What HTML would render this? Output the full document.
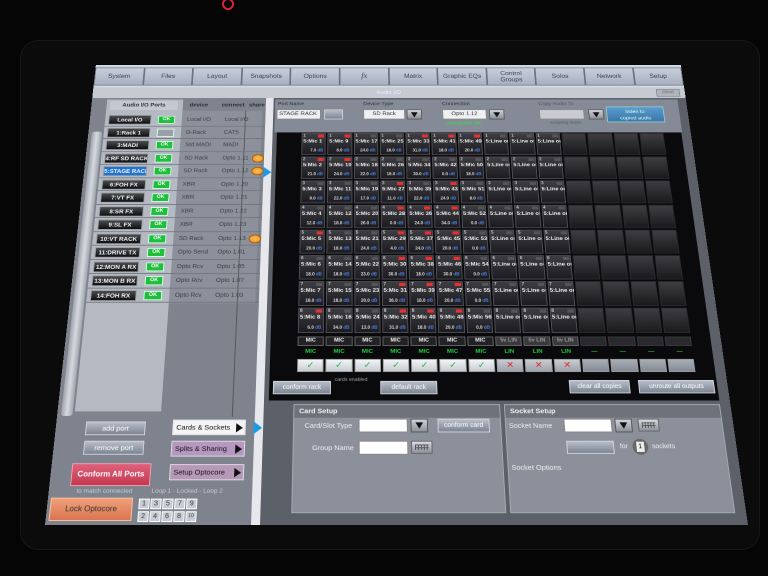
<!DOCTYPE html>
<html><head><meta charset="utf-8">
<style>
*{box-sizing:border-box;margin:0;padding:0}
html,body{width:768px;height:576px;overflow:hidden;background:#050505;font-family:"Liberation Sans",sans-serif}
.ring{position:absolute;left:222px;top:-2px;width:12px;height:12px;border:2px solid #e0203a;border-radius:50%}
.bezel{position:absolute;left:20px;top:40px;width:740px;height:510px;border-radius:18px;background:#0a0b0a;border:1px solid #151914}
#wrap{position:absolute;left:45px;top:-35px;width:703px;height:560px;transform-origin:50% 100%;transform:perspective(434px) rotateX(9deg) skewX(1deg)}
#scr{position:absolute;left:0;top:0;width:703px;height:560px;background:#5c6068;overflow:hidden}
.abs{position:absolute}
.tabbar{left:0;top:0;width:703px;height:33px;background:#d2d6de}
.tab{position:absolute;top:4px;height:26px;width:58.6px;background:linear-gradient(#c9cfdb,#a8b0c0);border:1px solid #6c7282;font-size:8px;color:#3a4050;text-align:center;line-height:24px}
.tab.two{line-height:9px;padding-top:3px}
.title{left:0;top:33px;width:703px;height:15px;background:#c6cad2;font-size:7px;color:#eef;text-align:center;line-height:15px}
.close{right:6px;top:35px;width:28px;height:11px;background:#b0b4bc;border:1px solid #888;font-size:6px;color:#666;text-align:center;line-height:9px}
.left{left:0;top:48px;width:206px;height:512px;background:#7e838d}
.listbg{left:18px;top:50px;width:90px;height:390px;background:#b4b9c2}
.devbg{left:108px;top:66px;width:94px;height:250px;background:#8b909a}
.scroll{left:4px;top:95px;width:12px;height:350px;background:linear-gradient(90deg,#9ea3ac,#d6d9df,#9ea3ac);border-radius:3px}
.hdr{top:52px;height:13px;font-size:7px;font-weight:bold;color:#2c3038;line-height:13px}
.row{position:absolute;left:18px;width:188px;height:17.5px;border-bottom:1px solid #6d727c}
.pb{position:absolute;left:4px;top:2px;width:50px;height:13px;background:linear-gradient(#4a4c50,#0e0f12);color:#f2f2f2;font-size:7px;font-weight:bold;text-align:center;line-height:13px;white-space:nowrap;overflow:hidden;border:1px solid #999}
.pb.sel{background:#1d74d8}
.ok{position:absolute;left:62px;top:3px;width:20px;height:11px;background:#1fbf3c;border:1px solid #dfe;color:#fff;font-size:6px;font-weight:bold;text-align:center;line-height:9px}
.ok.off{background:#9aa0a8}
.dv{position:absolute;left:96px;top:0;font-size:7px;color:#3c4048;line-height:17px}
.cn{position:absolute;left:140px;top:0;font-size:7px;color:#3c4048;line-height:17px}
.sh{position:absolute;left:174px;top:3px;width:14px;height:11px;border-radius:50%;background:radial-gradient(#ffc060,#e88a10);border:1px solid #a05a00}
.strip{left:206px;top:48px;width:9px;height:512px;background:#e6e8ec}
.arr{position:absolute;width:0;height:0;border-top:7px solid transparent;border-bottom:7px solid transparent;border-left:9px solid #1a9ae8}
.right{left:215px;top:48px;width:488px;height:512px;background:#5c6068}
.formbg{left:217px;top:50px;width:476px;height:46px;background:#858b96}
.lbl{position:absolute;font-size:6.5px;color:#2a2e36}
.inp{position:absolute;background:#eef0f2;border:1px solid #888;font-size:7px;color:#333;text-align:center;line-height:12px;height:14px}
.dd{position:absolute;height:14px;width:18px;background:linear-gradient(#d0d4da,#8a9098);border:1px solid #555}
.dd:after{content:"";position:absolute;left:4px;top:3px;border-left:4px solid transparent;border-right:4px solid transparent;border-top:7px solid #111}
.btn{position:absolute;background:linear-gradient(#b7bdc8,#7d8593);border:1px solid #d0d4da;color:#fff;font-size:7px;text-align:center;white-space:nowrap}
.grid{left:220px;top:96px;width:472px;height:332px;background:#0a0a0c}
.cells{position:absolute;left:29px;top:1px;display:grid;grid-template-columns:repeat(14,28.3px);grid-auto-rows:30px;gap:2px}
.c{position:relative;background:linear-gradient(#3c3c42,#1c1c20);border:1px solid #505058;color:#f0f0f0;font-size:6.5px;font-weight:bold}
.c i{position:absolute;left:1px;top:0;font-size:5px;font-style:normal;color:#ccc}
.c b{position:absolute;right:1px;top:1px;width:7px;height:4px;background:#555}
.c b.r{background:#e83030}
.c span{position:absolute;left:1px;top:7px;white-space:nowrap;overflow:hidden;width:26px}
.c em{position:absolute;right:2px;bottom:2px;font-style:normal;font-size:5px;color:#ddd}
.c em:after{content:" dB";color:#4a7fe0}
.c.e{background:linear-gradient(#3e3e42,#1a1a1c);border-color:#2a2a2e}
.c.e *{display:none}
.labs{position:absolute;left:29px;top:259px;display:grid;grid-template-columns:repeat(14,28.3px);gap:2px}
.labs div{height:11px;background:#222226;border:1px solid #666;color:#eee;font-size:6px;font-weight:bold;text-align:center;line-height:9px}
.labs div.g{background:#3a3a3e;color:#999}
.labs div.n{background:#2a2a2e;border-color:#3a3a3e}
.grn{position:absolute;left:29px;top:273px;display:grid;grid-template-columns:repeat(14,28.3px);gap:2px}
.grn div{color:#22d040;font-size:6.5px;font-weight:bold;text-align:center}
.chk{position:absolute;left:29px;top:285px;display:grid;grid-template-columns:repeat(14,28.3px);gap:2px}
.chk div{height:15px;background:linear-gradient(#f2f4f6,#c8ccd2);border:1px solid #999;color:#2fb050;font-size:10px;text-align:center;line-height:13px}
.chk div.x{background:linear-gradient(#c8ccd2,#9ea4ac);color:#e02828}
.chk div.n{background:linear-gradient(#a8aeb6,#858b94)}
.panel{position:absolute;background:#8b909a;border:1px solid #a4a9b2}
.ph{height:14px;background:#6e727b;color:#f2f2f4;font-size:7.5px;font-weight:bold;line-height:14px;padding-left:5px}
.kb{position:absolute;width:22px;height:14px;background:linear-gradient(#d8dce2,#8c929a);border:1px solid #666}
.kb:after{content:"";position:absolute;left:3px;top:3px;width:14px;height:6px;background:repeating-linear-gradient(90deg,#555 0 1px,transparent 1px 3px),repeating-linear-gradient(#555 0 1px,transparent 1px 3px)}
.sb{position:absolute;height:17px;font-size:7.5px;color:#111;line-height:16px;padding-left:3px;border:1px solid #ddd}
.sb:after{content:"";position:absolute;right:2px;top:3px;border-top:5px solid transparent;border-bottom:5px solid transparent;border-left:7px solid #111}
.num{position:absolute;width:11px;height:11px;background:#c8ccd4;border:1px solid #fff;font-size:7px;color:#333;text-align:center;line-height:9px}
</style></head><body>
<div class="ring"></div>
<div class="bezel"></div>
<div id="wrap"><div id="scr">
<div class="abs tabbar"></div>
<div class="tab" style="left:0">System</div>
<div class="tab" style="left:58.6px">Files</div>
<div class="tab" style="left:117.2px">Layout</div>
<div class="tab" style="left:175.8px">Snapshots</div>
<div class="tab" style="left:234.4px">Options</div>
<div class="tab" style="left:293px;font-style:italic;font-family:'Liberation Serif',serif;font-size:10px">fx</div>
<div class="tab" style="left:351.6px">Matrix</div>
<div class="tab" style="left:410.2px">Graphic EQs</div>
<div class="tab two" style="left:468.8px">Control<br>Groups</div>
<div class="tab" style="left:527.4px">Solos</div>
<div class="tab" style="left:586px">Network</div>
<div class="tab" style="left:644.6px">Setup</div>
<div class="abs title">Audio I/O</div>
<div class="abs close">close</div>

<div class="abs left"></div>
<div class="abs listbg"></div>
<div class="abs devbg"></div>
<div class="abs scroll"></div>
<div class="abs" style="left:182px;top:66px;width:1px;height:380px;background:#555"></div>
<div class="abs hdr" style="left:22px;width:80px;text-align:center;background:#c4c8d0">Audio I/O Ports</div>
<div class="abs hdr" style="left:116px">device</div>
<div class="abs hdr" style="left:154px">connect</div>
<div class="abs hdr" style="left:186px">share</div>

<div class="row" style="top:70px"><div class="pb">Local I/O</div><div class="ok">OK</div><div class="dv">Local I/O</div><div class="cn">Local I/O</div></div>
<div class="row" style="top:87.5px"><div class="pb">1:Rack 1</div><div class="ok off"></div><div class="dv">D-Rack</div><div class="cn">CAT5</div></div>
<div class="row" style="top:105px"><div class="pb">3:MADI</div><div class="ok">OK</div><div class="dv">Std MADI</div><div class="cn">MADI</div></div>
<div class="row" style="top:122.5px"><div class="pb">4:RF SD RACK</div><div class="ok">OK</div><div class="dv">SD Rack</div><div class="cn">Opto 1.11</div><div class="sh"></div></div>
<div class="row" style="top:140px"><div class="pb sel">5:STAGE RACK</div><div class="ok">OK</div><div class="dv">SD Rack</div><div class="cn">Opto 1.12</div><div class="sh"></div></div>
<div class="row" style="top:157.5px"><div class="pb">6:FOH FX</div><div class="ok">OK</div><div class="dv">XBR</div><div class="cn">Opto 1.20</div></div>
<div class="row" style="top:175px"><div class="pb">7:VT FX</div><div class="ok">OK</div><div class="dv">XBR</div><div class="cn">Opto 1.21</div></div>
<div class="row" style="top:192.5px"><div class="pb">8:SR FX</div><div class="ok">OK</div><div class="dv">XBR</div><div class="cn">Opto 1.22</div></div>
<div class="row" style="top:210px"><div class="pb">9:SL FX</div><div class="ok">OK</div><div class="dv">XBR</div><div class="cn">Opto 1.23</div></div>
<div class="row" style="top:227.5px"><div class="pb">10:VT RACK</div><div class="ok">OK</div><div class="dv">SD Rack</div><div class="cn">Opto 1.13</div><div class="sh"></div></div>
<div class="row" style="top:245px"><div class="pb">11:DRIVE TX</div><div class="ok">OK</div><div class="dv">Opto Send</div><div class="cn">Opto 1.01</div></div>
<div class="row" style="top:262.5px"><div class="pb">12:MON A RX</div><div class="ok">OK</div><div class="dv">Opto Rcv</div><div class="cn">Opto 1.05</div></div>
<div class="row" style="top:280px"><div class="pb">13:MON B RX</div><div class="ok">OK</div><div class="dv">Opto Rcv</div><div class="cn">Opto 1.07</div></div>
<div class="row" style="top:297.5px"><div class="pb">14:FOH RX</div><div class="ok">OK</div><div class="dv">Opto Rcv</div><div class="cn">Opto 1.03</div></div>

<div class="btn" style="left:31px;top:451px;width:62px;height:15px;line-height:13px;font-size:7.5px">add port</div>
<div class="btn" style="left:31px;top:472px;width:62px;height:15px;line-height:13px;font-size:7.5px">remove port</div>
<div class="abs" style="left:21px;top:496px;width:81px;height:24px;background:linear-gradient(#e0607a,#c23a52);border:1px solid #f0a0b0;color:#fff;font-size:8px;font-weight:bold;text-align:center;line-height:22px">Conform All Ports</div>
<div class="abs" style="left:28px;top:522px;font-size:6.5px;color:#c8ccd4">to match connected</div>
<div class="abs" style="left:104px;top:522px;font-size:6.5px;color:#c8ccd4">Loop 1 - Locked - Loop 2</div>
<div class="abs" style="left:3px;top:532px;width:83px;height:24px;background:linear-gradient(#f0a07a,#d87650);border:1px solid #f8c0a0;color:#333;font-size:8px;text-align:center;line-height:22px">Lock Optocore</div>
<div class="num" style="left:92px;top:533px">1</div><div class="num" style="left:104px;top:533px">3</div><div class="num" style="left:116px;top:533px">5</div><div class="num" style="left:128px;top:533px">7</div><div class="num" style="left:140px;top:533px">9</div>
<div class="num" style="left:92px;top:546px">2</div><div class="num" style="left:104px;top:546px">4</div><div class="num" style="left:116px;top:546px">6</div><div class="num" style="left:128px;top:546px">8</div><div class="num" style="left:140px;top:546px;font-size:5px">10</div>
<div class="sb" style="left:121px;top:449px;width:76px;background:#f4f4f6">Cards &amp; Sockets</div>
<div class="sb" style="left:121px;top:472px;width:76px;background:#b498c0">Splits &amp; Sharing</div>
<div class="sb" style="left:121px;top:497px;width:76px;background:#b898b8">Setup Optocore</div>

<div class="abs strip"></div>
<div class="arr" style="left:206px;top:143px"></div>
<div class="arr" style="left:205px;top:451px"></div>

<div class="abs right"></div>
<div class="abs formbg"></div>
<div class="lbl" style="left:220px;top:53px">Port Name</div>
<div class="inp" style="left:219px;top:64px;width:52px;text-align:left;padding-left:2px">STAGE RACK</div>
<div class="btn" style="left:275px;top:64px;width:22px;height:14px"></div>
<div class="lbl" style="left:321px;top:53px">Device Type</div>
<div class="inp" style="left:321px;top:64px;width:49px">SD Rack</div>
<div class="dd" style="left:372px;top:64px"></div>
<div class="lbl" style="left:414px;top:53px">Connection</div>
<div class="inp" style="left:414px;top:64px;width:52px">Opto 1.12</div>
<div class="dd" style="left:469px;top:64px"></div>
<div class="abs" style="left:418px;top:80px;font-size:6.5px;color:#2ee050">connected OK</div>
<div class="lbl" style="left:528px;top:53px;color:#50555e">Copy Audio To</div>
<div class="inp" style="left:528px;top:64px;width:53px;background:#c8ccd2"></div>
<div class="dd" style="left:586px;top:64px"></div>
<div class="abs" style="left:540px;top:80px;font-size:5px;color:#50555e">excluding routes</div>
<div class="abs" style="left:607px;top:60px;width:68px;height:22px;background:linear-gradient(#5a9cd0,#3a76aa);border:1px solid #9cc;color:#dfe;font-size:6.5px;text-align:center;line-height:9px;padding-top:2px">listen to<br>copied audio</div>

<div class="abs grid">
<div class="cells">
<div class="c"><i>1</i><b class="r"></b><span>5:Mic 1</span><em>7.0</em></div><div class="c"><i>1</i><b class="r"></b><span>5:Mic 9</span><em>8.0</em></div><div class="c"><i>1</i><b></b><span>5:Mic 17</span><em>24.0</em></div><div class="c"><i>1</i><b></b><span>5:Mic 25</span><em>18.0</em></div><div class="c"><i>1</i><b class="r"></b><span>5:Mic 33</span><em>31.0</em></div><div class="c"><i>1</i><b class="r"></b><span>5:Mic 41</span><em>18.0</em></div><div class="c"><i>1</i><b class="r"></b><span>5:Mic 49</span><em>20.0</em></div><div class="c"><i>1</i><b></b><span>5:Line ou</span></div><div class="c"><i>1</i><b></b><span>5:Line ou</span></div><div class="c"><i>1</i><b></b><span>5:Line ou</span></div><div class="c e"></div><div class="c e"></div><div class="c e"></div><div class="c e"></div>
<div class="c"><i>2</i><b class="r"></b><span>5:Mic 2</span><em>21.0</em></div><div class="c"><i>2</i><b class="r"></b><span>5:Mic 10</span><em>24.0</em></div><div class="c"><i>2</i><b></b><span>5:Mic 18</span><em>22.0</em></div><div class="c"><i>2</i><b></b><span>5:Mic 26</span><em>18.0</em></div><div class="c"><i>2</i><b></b><span>5:Mic 34</span><em>30.0</em></div><div class="c"><i>2</i><b></b><span>5:Mic 42</span><em>0.0</em></div><div class="c"><i>2</i><b></b><span>5:Mic 50</span><em>18.0</em></div><div class="c"><i>2</i><b></b><span>5:Line ou</span></div><div class="c"><i>2</i><b></b><span>5:Line ou</span></div><div class="c"><i>2</i><b></b><span>5:Line ou</span></div><div class="c e"></div><div class="c e"></div><div class="c e"></div><div class="c e"></div>
<div class="c"><i>3</i><b></b><span>5:Mic 3</span><em>9.0</em></div><div class="c"><i>3</i><b></b><span>5:Mic 11</span><em>22.0</em></div><div class="c"><i>3</i><b></b><span>5:Mic 19</span><em>17.0</em></div><div class="c"><i>3</i><b class="r"></b><span>5:Mic 27</span><em>11.0</em></div><div class="c"><i>3</i><b></b><span>5:Mic 35</span><em>22.0</em></div><div class="c"><i>3</i><b class="r"></b><span>5:Mic 43</span><em>24.0</em></div><div class="c"><i>3</i><b></b><span>5:Mic 51</span><em>8.0</em></div><div class="c"><i>3</i><b></b><span>5:Line ou</span></div><div class="c"><i>3</i><b></b><span>5:Line ou</span></div><div class="c"><i>3</i><b></b><span>5:Line ou</span></div><div class="c e"></div><div class="c e"></div><div class="c e"></div><div class="c e"></div>
<div class="c"><i>4</i><b></b><span>5:Mic 4</span><em>12.0</em></div><div class="c"><i>4</i><b></b><span>5:Mic 12</span><em>18.0</em></div><div class="c"><i>4</i><b></b><span>5:Mic 20</span><em>26.0</em></div><div class="c"><i>4</i><b class="r"></b><span>5:Mic 28</span><em>0.0</em></div><div class="c"><i>4</i><b class="r"></b><span>5:Mic 36</span><em>24.0</em></div><div class="c"><i>4</i><b class="r"></b><span>5:Mic 44</span><em>34.0</em></div><div class="c"><i>4</i><b></b><span>5:Mic 52</span><em>0.0</em></div><div class="c"><i>4</i><b></b><span>5:Line ou</span></div><div class="c"><i>4</i><b></b><span>5:Line ou</span></div><div class="c"><i>4</i><b></b><span>5:Line ou</span></div><div class="c e"></div><div class="c e"></div><div class="c e"></div><div class="c e"></div>
<div class="c"><i>5</i><b class="r"></b><span>5:Mic 5</span><em>20.0</em></div><div class="c"><i>5</i><b></b><span>5:Mic 13</span><em>18.0</em></div><div class="c"><i>5</i><b></b><span>5:Mic 21</span><em>24.0</em></div><div class="c"><i>5</i><b class="r"></b><span>5:Mic 29</span><em>4.0</em></div><div class="c"><i>5</i><b class="r"></b><span>5:Mic 37</span><em>24.0</em></div><div class="c"><i>5</i><b class="r"></b><span>5:Mic 45</span><em>20.0</em></div><div class="c"><i>5</i><b></b><span>5:Mic 53</span><em>0.0</em></div><div class="c"><i>5</i><b></b><span>5:Line ou</span></div><div class="c"><i>5</i><b></b><span>5:Line ou</span></div><div class="c"><i>5</i><b></b><span>5:Line ou</span></div><div class="c e"></div><div class="c e"></div><div class="c e"></div><div class="c e"></div>
<div class="c"><i>6</i><b></b><span>5:Mic 6</span><em>18.0</em></div><div class="c"><i>6</i><b></b><span>5:Mic 14</span><em>18.0</em></div><div class="c"><i>6</i><b></b><span>5:Mic 22</span><em>23.0</em></div><div class="c"><i>6</i><b class="r"></b><span>5:Mic 30</span><em>36.0</em></div><div class="c"><i>6</i><b class="r"></b><span>5:Mic 38</span><em>18.0</em></div><div class="c"><i>6</i><b class="r"></b><span>5:Mic 46</span><em>30.0</em></div><div class="c"><i>6</i><b></b><span>5:Mic 54</span><em>0.0</em></div><div class="c"><i>6</i><b></b><span>5:Line ou</span></div><div class="c"><i>6</i><b></b><span>5:Line ou</span></div><div class="c"><i>6</i><b></b><span>5:Line ou</span></div><div class="c e"></div><div class="c e"></div><div class="c e"></div><div class="c e"></div>
<div class="c"><i>7</i><b></b><span>5:Mic 7</span><em>18.0</em></div><div class="c"><i>7</i><b></b><span>5:Mic 15</span><em>18.0</em></div><div class="c"><i>7</i><b></b><span>5:Mic 23</span><em>20.0</em></div><div class="c"><i>7</i><b class="r"></b><span>5:Mic 31</span><em>36.0</em></div><div class="c"><i>7</i><b class="r"></b><span>5:Mic 39</span><em>18.0</em></div><div class="c"><i>7</i><b class="r"></b><span>5:Mic 47</span><em>20.0</em></div><div class="c"><i>7</i><b></b><span>5:Mic 55</span><em>0.0</em></div><div class="c"><i>7</i><b></b><span>5:Line ou</span></div><div class="c"><i>7</i><b></b><span>5:Line ou</span></div><div class="c"><i>7</i><b></b><span>5:Line ou</span></div><div class="c e"></div><div class="c e"></div><div class="c e"></div><div class="c e"></div>
<div class="c"><i>8</i><b class="r"></b><span>5:Mic 8</span><em>6.0</em></div><div class="c"><i>8</i><b></b><span>5:Mic 16</span><em>34.0</em></div><div class="c"><i>8</i><b></b><span>5:Mic 24</span><em>13.0</em></div><div class="c"><i>8</i><b class="r"></b><span>5:Mic 32</span><em>31.0</em></div><div class="c"><i>8</i><b class="r"></b><span>5:Mic 40</span><em>18.0</em></div><div class="c"><i>8</i><b class="r"></b><span>5:Mic 48</span><em>20.0</em></div><div class="c"><i>8</i><b></b><span>5:Mic 56</span><em>0.0</em></div><div class="c"><i>8</i><b></b><span>5:Line ou</span></div><div class="c"><i>8</i><b></b><span>5:Line ou</span></div><div class="c"><i>8</i><b></b><span>5:Line ou</span></div><div class="c e"></div><div class="c e"></div><div class="c e"></div><div class="c e"></div>
</div>
<div class="labs"><div>MIC</div><div>MIC</div><div>MIC</div><div>MIC</div><div>MIC</div><div>MIC</div><div>MIC</div><div class="g">5v LIN</div><div class="g">5v LIN</div><div class="g">5v LIN</div><div class="n"></div><div class="n"></div><div class="n"></div><div class="n"></div></div>
<div class="grn"><div>MIC</div><div>MIC</div><div>MIC</div><div>MIC</div><div>MIC</div><div>MIC</div><div>MIC</div><div>LIN</div><div>LIN</div><div>LIN</div><div>—</div><div>—</div><div>—</div><div>—</div></div>
<div class="chk"><div>✓</div><div>✓</div><div>✓</div><div>✓</div><div>✓</div><div>✓</div><div>✓</div><div class="x">✕</div><div class="x">✕</div><div class="x">✕</div><div class="n"></div><div class="n"></div><div class="n"></div><div class="n"></div></div>
<div class="btn" style="left:4px;top:310px;width:61px;height:15px;line-height:13px">conform rack</div>
<div class="abs" style="left:69px;top:306px;font-size:5.5px;color:#aaa">cards enabled</div>
<div class="btn" style="left:117px;top:310px;width:60px;height:15px;line-height:13px">default rack</div>
<div class="btn" style="left:316px;top:309px;width:64px;height:15px;line-height:13px">clear all copies</div>
<div class="btn" style="left:389px;top:309px;width:80px;height:15px;line-height:13px">unroute all outputs</div>
</div>

<div class="panel" style="left:246px;top:432px;width:216px;height:116px"><div class="ph">Card Setup</div></div>
<div class="lbl" style="left:258px;top:451px;font-size:7.5px;color:#f0f0f2">Card/Slot Type</div>
<div class="inp" style="left:314px;top:448px;width:51px;height:15px;background:#fff"></div>
<div class="dd" style="left:368px;top:448px;height:15px"></div>
<div class="btn" style="left:396px;top:448px;width:54px;height:15px;line-height:13px">conform card</div>
<div class="lbl" style="left:266px;top:475px;font-size:7.5px;color:#f0f0f2">Group Name</div>
<div class="inp" style="left:314px;top:472px;width:51px;height:15px;background:#fff"></div>
<div class="kb" style="left:368px;top:472px"></div>
<div class="panel" style="left:466px;top:432px;width:226px;height:116px"><div class="ph">Socket Setup</div></div>
<div class="lbl" style="left:470px;top:451px;font-size:7.5px;color:#f0f0f2">Socket Name</div>
<div class="inp" style="left:527px;top:448px;width:50px;height:15px;background:#fff"></div>
<div class="dd" style="left:580px;top:448px;height:15px"></div>
<div class="kb" style="left:604px;top:448px"></div>
<div class="btn" style="left:528px;top:472px;width:49px;height:14px"></div>
<div class="lbl" style="left:583px;top:475px;font-size:7px;color:#f0f0f2">for</div>
<div class="abs" style="left:596px;top:470px;width:16px;height:17px;border-radius:50%;background:#666;"><div style="margin:3px 4px;width:8px;height:11px;background:#eee;font-size:7px;text-align:center;line-height:11px">1</div></div>
<div class="lbl" style="left:616px;top:475px;font-size:7px;color:#f0f0f2">sockets</div>
<div class="lbl" style="left:470px;top:496px;font-size:7.5px;color:#f0f0f2">Socket Options</div>
</div></div>
</body></html>
